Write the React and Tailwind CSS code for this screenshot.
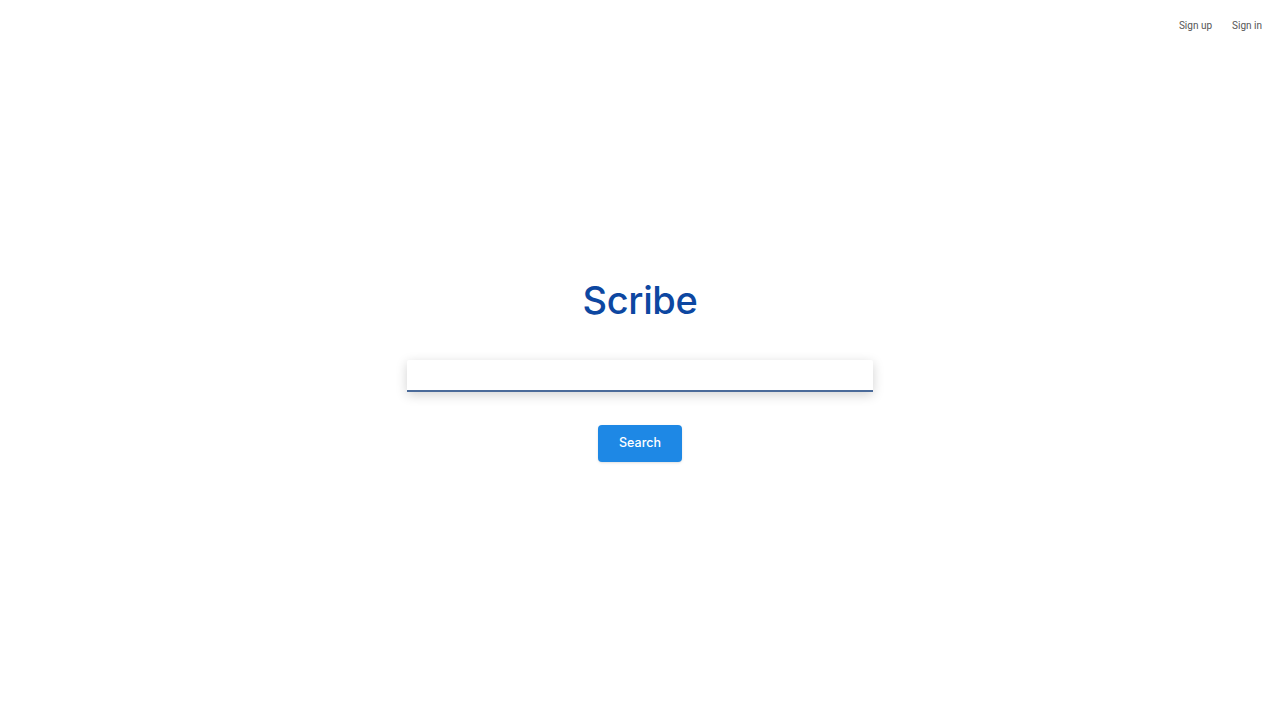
import React, { useState } from 'react';

const App = () => {
  const [query, setQuery] = useState('');

  return (
    <div className="min-h-screen bg-white" style={{ fontFamily: 'Roboto, "Noto Sans", sans-serif' }}>
      {/* Top nav */}
      <div className="flex justify-end gap-[20px] pt-[18px] pr-[18px] text-[10px] text-[#555]">
        <a href="#" className="hover:underline">Sign up</a>
        <a href="#" className="hover:underline">Sign in</a>
      </div>

      {/* Main */}
      <div className="flex flex-col items-center pt-[248px]">
        <h1
          className="text-[38px] leading-none font-medium text-[#0d47a1] tracking-[-0.01em]"
          style={{ fontFamily: 'Inter, "Open Sans", sans-serif' }}
        >
          Scribe
        </h1>

        <input
          type="text"
          value={query}
          onChange={(e) => setQuery(e.target.value)}
          className="mt-[41px] w-[466px] h-[32px] px-3 bg-white border-b-2 border-[#4a6a99] rounded-t-[2px] shadow-[0_3px_12px_rgba(0,0,0,0.18)] outline-none text-sm"
        />

        <button
          className="mt-[33px] w-[84px] h-[37px] rounded-[4px] bg-[#1e88e5] text-white text-[12.5px] font-medium shadow-sm hover:bg-[#1976d2]"
          style={{ fontFamily: 'Inter, Roboto, sans-serif' }}
        >
          Search
        </button>
      </div>
    </div>
  );
};

export default App;
